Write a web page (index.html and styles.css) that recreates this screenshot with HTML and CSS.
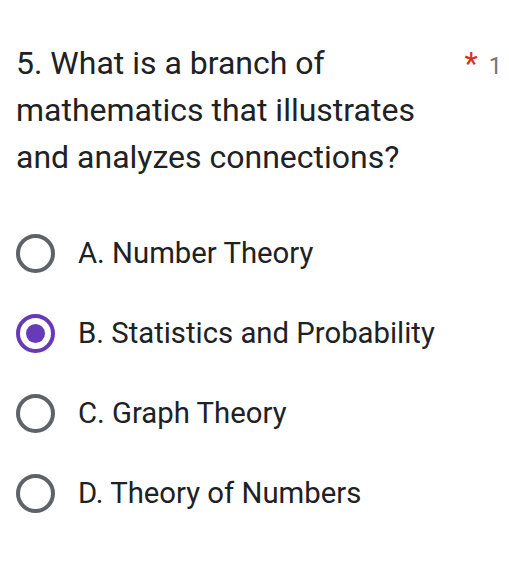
FILE: index.html
```html
<!DOCTYPE html>
<html>
<head>
<meta charset="utf-8">
<link rel="stylesheet" href="styles.css">
</head>
<body>
<div class="card">
  <div class="head">
    <div class="question">5. What is a branch of mathematics that illustrates and analyzes connections?</div>
    <div class="meta"><span class="req">*</span><span class="pts">1</span></div>
  </div>
  <div class="options">
    <label class="opt"><span class="radio"></span><span class="label">A. Number Theory</span></label>
    <label class="opt"><span class="radio on"></span><span class="label">B. Statistics and Probability</span></label>
    <label class="opt"><span class="radio"></span><span class="label">C. Graph Theory</span></label>
    <label class="opt"><span class="radio"></span><span class="label">D. Theory of Numbers</span></label>
  </div>
</div>
</body>
</html>
```
FILE: styles.css
```css
html, body {
  margin: 0;
  padding: 0;
  background: #ffffff;
}
body {
  font-family: Roboto, "Noto Sans", sans-serif;
  color: #202124;
}
.card {
  padding: 40px 0 0 16px;
}
.head {
  display: flex;
  align-items: flex-start;
}
.question {
  width: 420px;
  font-size: 32px;
  line-height: 47px;
}
.meta {
  margin-left: auto;
  padding-right: 7px;
  display: flex;
  align-items: baseline;
  gap: 11px;
  font-size: 23.5px;
  line-height: 47px;
}
.req {
  color: #d93025;
  font-size: 31px;
}
.pts {
  color: #70757a;
}
.options {
  margin-top: 32px;
  display: flex;
  flex-direction: column;
}
.opt {
  display: flex;
  align-items: center;
  height: 80px;
}
.radio {
  box-sizing: border-box;
  width: 39px;
  height: 39px;
  border: 4px solid #5f6368;
  border-radius: 50%;
  display: flex;
  align-items: center;
  justify-content: center;
  flex: none;
}
.radio.on {
  border-color: #673ab7;
}
.radio.on::after {
  content: "";
  width: 19px;
  height: 19px;
  border-radius: 50%;
  background: #673ab7;
}
.label {
  margin-left: 23px;
  font-size: 29.3px;
}
```
